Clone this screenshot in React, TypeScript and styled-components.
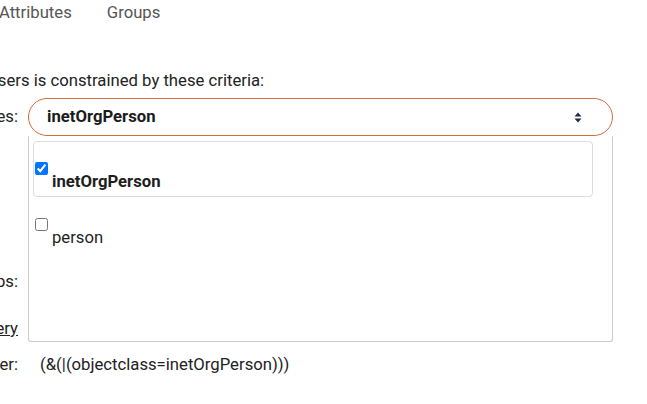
import React, { useState } from 'react';
import styled, { createGlobalStyle } from 'styled-components';

const GlobalStyle = createGlobalStyle`
  html, body {
    margin: 0;
    padding: 0;
    background: #fff;
    overflow: hidden;
  }
  body {
    font-family: Roboto, "Liberation Sans", Arial, sans-serif;
    font-size: 16.7px;
    line-height: 24px;
    color: #222;
  }
`;

const Page = styled.div`
  width: 847px;
  margin-left: -200px;
`;

const Tabs = styled.div`
  display: flex;
  gap: 35px;
  padding-top: 1px;
  margin-left: -6px;
`;

const Tab = styled.span`
  color: #555;
  white-space: nowrap;
`;

const Intro = styled.p`
  margin: 44px 0 0 0;
  padding-left: 1px;
  white-space: nowrap;
`;

const Form = styled.div`
  display: grid;
  grid-template-columns: 218px 585px;
  column-gap: 10px;
  align-items: center;
`;

const Label = styled.label<{ $top?: number; $end?: boolean }>`
  text-align: right;
  white-space: nowrap;
  margin-top: ${(p) => p.$top ?? 0}px;
  align-self: ${(p) => (p.$end ? 'end' : 'center')};
`;

const Field = styled.div<{ $top?: number }>`
  position: relative;
  margin-top: ${(p) => p.$top ?? 0}px;
`;

const Select = styled.button`
  display: flex;
  align-items: center;
  justify-content: space-between;
  width: 100%;
  height: 38px;
  box-sizing: border-box;
  padding: 0 30px 0 18px;
  border: 1px solid #d26b3d;
  border-radius: 19px;
  background: #fff;
  font: inherit;
  font-weight: 700;
  color: #1b1b1b;
  cursor: pointer;
`;

const Dropdown = styled.div`
  position: absolute;
  top: 38px;
  left: 0;
  width: 100%;
  height: 206px;
  box-sizing: border-box;
  padding: 4px 19px 4px 4px;
  background: #fff;
  border: 1px solid #cbcbcb;
  border-top-color: transparent;
  border-radius: 0 0 3px 3px;
  z-index: 2;
`;

const Option = styled.label<{ $active?: boolean }>`
  display: block;
  height: 56px;
  box-sizing: border-box;
  padding: 20px 1px 0 1px;
  border: 1px solid ${(p) => (p.$active ? '#dcdcdc' : 'transparent')};
  border-radius: 4px;
  cursor: pointer;
`;

const Check = styled.input`
  display: block;
  width: 13px;
  height: 13px;
  margin: 0;
`;

const OptionText = styled.span<{ $bold?: boolean }>`
  display: block;
  margin: -2px 0 0 17px;
  line-height: 18px;
  font-weight: ${(p) => (p.$bold ? 700 : 400)};
  color: #1e1e1e;
`;

const ListBox = styled.div`
  height: 148px;
  border: 1px solid #ddd;
  border-radius: 3px;
  box-sizing: border-box;
`;

const QueryLink = styled.a`
  color: #222;
  text-decoration: underline;
`;

const FilterValue = styled.span`
  padding-left: 12px;
  white-space: nowrap;
`;

const SortIcon = () => (
  <svg width="8" height="11" viewBox="0 0 8 11">
    <path d="M4 0.5 L7.5 4.5 H0.5 Z M4 10.5 L7.5 6.5 H0.5 Z" fill="#1d2d44" />
  </svg>
);

const classes = ['inetOrgPerson', 'person'];

export default function App() {
  const [chosen, setChosen] = useState<string[]>(['inetOrgPerson']);

  const toggle = (c: string) =>
    setChosen((prev) => (prev.includes(c) ? prev.filter((x) => x !== c) : [...prev, c]));

  return (
    <>
      <GlobalStyle />
      <Page>
        <Tabs>
          <Tab>Server</Tab>
          <Tab>Users</Tab>
          <Tab>Login Attributes</Tab>
          <Tab>Groups</Tab>
        </Tabs>

        <Intro>Listing and searching for users is constrained by these criteria:</Intro>

        <Form>
          <Label $top={5}>Only these object classes:</Label>
          <Field $top={5}>
            <Select type="button">
              <span>{chosen.join(', ')}</span>
              <SortIcon />
            </Select>
            <Dropdown>
              {classes.map((c) => (
                <Option key={c} $active={c === 'inetOrgPerson'}>
                  <Check type="checkbox" checked={chosen.includes(c)} onChange={() => toggle(c)} />
                  <OptionText $bold={chosen.includes(c)}>{c}</OptionText>
                </Option>
              ))}
            </Dropdown>
          </Field>

          <Label $end>Only from these groups:</Label>
          <Field $top={10}>
            <ListBox />
          </Field>

          <Label $top={23}>
            <QueryLink href="#">Edit LDAP Query</QueryLink>
          </Label>
          <span />

          <Label $top={12}>LDAP Filter:</Label>
          <Field $top={12}>
            <FilterValue>(&amp;(|(objectclass=inetOrgPerson)))</FilterValue>
          </Field>
        </Form>
      </Page>
    </>
  );
}
